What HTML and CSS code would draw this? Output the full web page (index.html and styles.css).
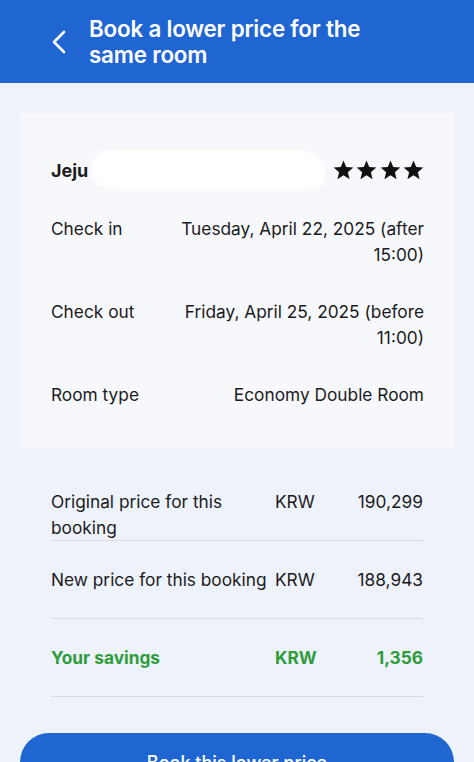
FILE: index.html
```html
<!DOCTYPE html>
<html lang="en">
<head>
    <meta charset="UTF-8">
    <title>Book a lower price</title>
    <link rel="stylesheet" href="styles.css">
</head>
<body>
    <header class="topbar">
        <svg class="back" width="16" height="26" viewBox="0 0 16 26">
            <path d="M13 3 L3 13 L13 23" fill="none" stroke="#fff" stroke-width="2.6" stroke-linecap="round" stroke-linejoin="round"/>
        </svg>
        <h1 class="title">Book a lower price for the same room</h1>
    </header>

    <main class="content">
        <section class="card">
            <div class="hotel">
                <span class="hotel-name">Jeju</span>
                <span class="redacted"></span>
                <span class="stars">
                    <svg width="21" height="20" viewBox="0 0 24 23"><path d="M12 0.5l3.1 7.6 8.2 0.6-6.3 5.3 2 8-7-4.4-7 4.4 2-8-6.3-5.3 8.2-0.6z"/></svg>
                    <svg width="21" height="20" viewBox="0 0 24 23"><path d="M12 0.5l3.1 7.6 8.2 0.6-6.3 5.3 2 8-7-4.4-7 4.4 2-8-6.3-5.3 8.2-0.6z"/></svg>
                    <svg width="21" height="20" viewBox="0 0 24 23"><path d="M12 0.5l3.1 7.6 8.2 0.6-6.3 5.3 2 8-7-4.4-7 4.4 2-8-6.3-5.3 8.2-0.6z"/></svg>
                    <svg width="21" height="20" viewBox="0 0 24 23"><path d="M12 0.5l3.1 7.6 8.2 0.6-6.3 5.3 2 8-7-4.4-7 4.4 2-8-6.3-5.3 8.2-0.6z"/></svg>
                </span>
            </div>
            <div class="detail">
                <span class="label">Check in</span>
                <span class="value">Tuesday, April 22, 2025 (after 15:00)</span>
            </div>
            <div class="detail">
                <span class="label">Check out</span>
                <span class="value">Friday, April 25, 2025 (before 11:00)</span>
            </div>
            <div class="detail">
                <span class="label">Room type</span>
                <span class="value">Economy Double Room</span>
            </div>
        </section>

        <section class="prices">
            <div class="price-row">
                <span class="price-label">Original price for this booking</span>
                <span class="currency">KRW</span>
                <span class="amount">190,299</span>
            </div>
            <div class="price-row">
                <span class="price-label">New price for this booking</span>
                <span class="currency">KRW</span>
                <span class="amount">188,943</span>
            </div>
            <div class="price-row savings">
                <span class="price-label">Your savings</span>
                <span class="currency">KRW</span>
                <span class="amount">1,356</span>
            </div>
        </section>

        <button class="book-btn">Book this lower price</button>
    </main>
</body>
</html>
```

FILE: styles.css
```css
body {
    margin: 0;
    padding: 0;
    background-color: #eef2fa;
    font-family: Inter, "Noto Sans", sans-serif;
    color: #1b1b1d;
    overflow: hidden;
    height: 762px;
}
.topbar {
    display: flex;
    align-items: center;
    gap: 22px;
    height: 83px;
    box-sizing: border-box;
    padding: 0 40px 0 51px;
    background-color: #2066d3;
    color: white;
}
.back {
    flex-shrink: 0;
}
.title {
    margin: 0;
    font-size: 22.4px;
    font-weight: 600;
    line-height: 26px;
    letter-spacing: -0.2px;
    max-width: 295px;
}
.content {
    padding: 30px 20px 0 20px;
}
.card {
    background-color: #f7f8fb;
    padding: 44px 30px 40px 31px;
    display: flex;
    flex-direction: column;
    gap: 31px;
}
.hotel {
    display: flex;
    align-items: center;
    height: 26px;
    margin-bottom: 2px;
}
.hotel-name {
    font-size: 18px;
    font-weight: 700;
}
.redacted {
    flex: 1;
    height: 34px;
    margin: 0 10px 0 6px;
    background-color: #ffffff;
    border-radius: 14px 20px 12px 18px;
    box-shadow: 0 0 4px 2px #ffffff;
}
.stars {
    display: flex;
    gap: 2.5px;
}
.stars svg {
    fill: #111;
}
.detail {
    display: flex;
    justify-content: space-between;
    gap: 40px;
    font-size: 17.3px;
    line-height: 26px;
}
.label {
    flex-shrink: 0;
}
.value {
    text-align: right;
}
.prices {
    margin: 15px 31px 0 31px;
}
.price-row {
    display: grid;
    grid-template-columns: 224px 58px 1fr;
    align-items: start;
    height: 78px;
    box-sizing: border-box;
    padding-top: 26px;
    border-bottom: 1px solid #d5dae3;
    font-size: 17.3px;
    line-height: 26px;
}
.price-label {
    padding-right: 8px;
}
.amount {
    text-align: right;
}
.savings {
    color: #2f9d3b;
    font-weight: 700;
}
.book-btn {
    display: block;
    width: 100%;
    height: 58px;
    margin-top: 36px;
    border: none;
    border-radius: 29px;
    background-color: #2066d3;
    color: white;
    font-family: Inter, "Noto Sans", sans-serif;
    font-size: 18px;
    font-weight: 500;
}
```
